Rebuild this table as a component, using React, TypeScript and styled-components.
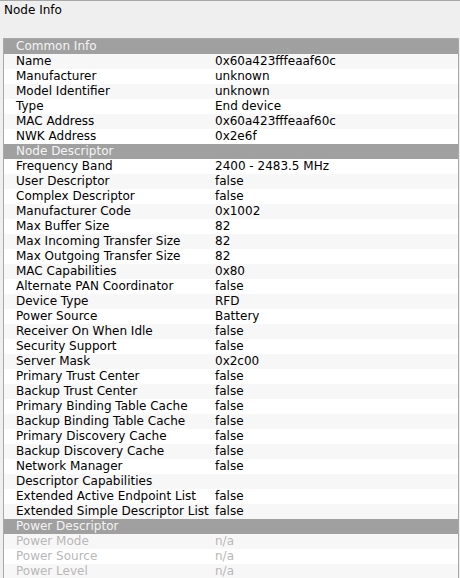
import React from "react";
import styled, { createGlobalStyle } from "styled-components";

const Global = createGlobalStyle`
  html, body { margin: 0; padding: 0; background: #efefef; }
  body { font-family: "DejaVu Sans", sans-serif; font-size: 12px; color: #000; }
`;

const Window = styled.div`
  width: 460px;
  height: 578px;
  overflow: hidden;
  background: #efefef;
  border-top: 1px solid #a8a8a8;
  box-sizing: border-box;
  display: flex;
  flex-direction: column;
`;

const Title = styled.div`
  height: 37px;
  padding: 2px 0 0 4px;
  box-sizing: border-box;
  line-height: 15px;
  flex: none;
`;

const List = styled.div`
  margin-left: 3px;
  margin-right: 1px;
  border: 1px solid #a8a8a8;
  border-bottom: none;
  background: #fff;
  flex: 1;
  overflow: hidden;
`;

const Row = styled.div<{ $alt?: boolean; $header?: boolean; $disabled?: boolean }>`
  display: grid;
  grid-template-columns: 208px 1fr;
  height: 15px;
  line-height: 15px;
  white-space: nowrap;
  background: ${(p) => (p.$header ? "#a0a0a0" : p.$alt ? "#f7f7f7" : "#ffffff")};
  color: ${(p) => (p.$header ? "#f4f4f4" : p.$disabled ? "#b8b8b8" : "#000")};
`;

const Label = styled.span`
  padding-left: 12px;
  overflow: hidden;
`;

const Value = styled.span`
  padding-left: 3px;
`;

type Item = { h: string } | { l: string; v: string; d?: boolean };

const items: Item[] = [
  { h: "Common Info" },
  { l: "Name", v: "0x60a423fffeaaf60c" },
  { l: "Manufacturer", v: "unknown" },
  { l: "Model Identifier", v: "unknown" },
  { l: "Type", v: "End device" },
  { l: "MAC Address", v: "0x60a423fffeaaf60c" },
  { l: "NWK Address", v: "0x2e6f" },
  { h: "Node Descriptor" },
  { l: "Frequency Band", v: "2400 - 2483.5 MHz" },
  { l: "User Descriptor", v: "false" },
  { l: "Complex Descriptor", v: "false" },
  { l: "Manufacturer Code", v: "0x1002" },
  { l: "Max Buffer Size", v: "82" },
  { l: "Max Incoming Transfer Size", v: "82" },
  { l: "Max Outgoing Transfer Size", v: "82" },
  { l: "MAC Capabilities", v: "0x80" },
  { l: "Alternate PAN Coordinator", v: "false" },
  { l: "Device Type", v: "RFD" },
  { l: "Power Source", v: "Battery" },
  { l: "Receiver On When Idle", v: "false" },
  { l: "Security Support", v: "false" },
  { l: "Server Mask", v: "0x2c00" },
  { l: "Primary Trust Center", v: "false" },
  { l: "Backup Trust Center", v: "false" },
  { l: "Primary Binding Table Cache", v: "false" },
  { l: "Backup Binding Table Cache", v: "false" },
  { l: "Primary Discovery Cache", v: "false" },
  { l: "Backup Discovery Cache", v: "false" },
  { l: "Network Manager", v: "false" },
  { l: "Descriptor Capabilities", v: "" },
  { l: "Extended Active Endpoint List", v: "false" },
  { l: "Extended Simple Descriptor List", v: "false" },
  { h: "Power Descriptor" },
  { l: "Power Mode", v: "n/a", d: true },
  { l: "Power Source", v: "n/a", d: true },
  { l: "Power Level", v: "n/a", d: true },
];

export default function App() {
  return (
    <>
      <Global />
      <Window>
        <Title>Node Info</Title>
        <List>
          {items.map((it, i) =>
            "h" in it ? (
              <Row key={i} $header>
                <Label>{it.h}</Label>
                <Value />
              </Row>
            ) : (
              <Row key={i} $alt={i % 2 === 1} $disabled={it.d}>
                <Label>{it.l}</Label>
                <Value>{it.v}</Value>
              </Row>
            )
          )}
        </List>
      </Window>
    </>
  );
}
